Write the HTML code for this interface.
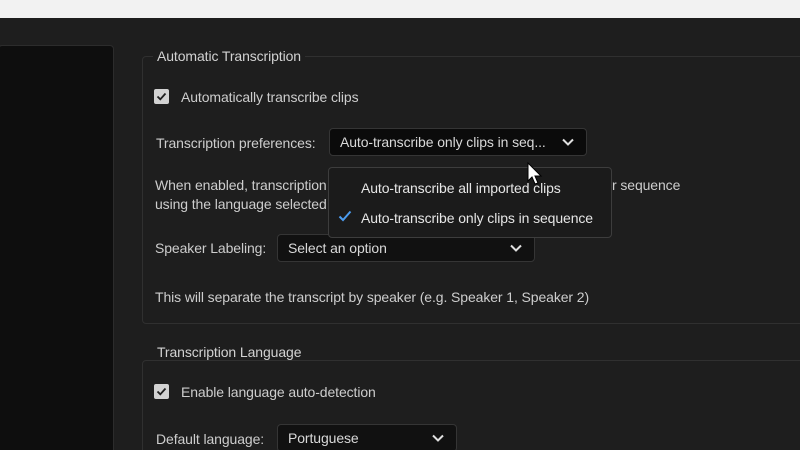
<!DOCTYPE html>
<html style="overflow:hidden;height:450px"><head><style>
body{margin:0;width:800px;height:450px;overflow:hidden;background:#1e1e1e;font-family:"Liberation Sans",sans-serif;color:#cdcdcd;position:relative}
.a{position:absolute;white-space:nowrap;font-size:14px;letter-spacing:-0.1px}
.top{position:absolute;left:0;top:0;width:800px;height:18px;background:#f2f2f2}
.left{position:absolute;left:-2px;top:45px;width:114px;height:420px;background:#0e0e0e;border:1px solid #2c2c2c;border-radius:4px}
.grp{position:absolute;left:142px;width:700px;border:1px solid #303030;border-radius:4px}
.leg{position:absolute;background:#1e1e1e;padding:0 4px;font-size:14px;letter-spacing:-0.1px;color:#d2d2d2}
.cb{position:absolute;width:15px;height:15px;background:#d2d2d2;border-radius:2px}
.cb svg{position:absolute;left:2px;top:2px}
.dd{position:absolute;height:26px;background:#0b0b0b;border:1px solid #353535;border-radius:4px}
.dd span{position:absolute;left:10px;top:5px;font-size:14px;letter-spacing:-0.1px;color:#d9d9d9;white-space:nowrap}
.dd svg{position:absolute;right:12px;top:9px}
.menu{position:absolute;left:328px;top:167px;width:282px;height:69px;background:#1b1b1b;border:1px solid #3d3d3d;border-radius:4px}
</style></head><body>
<div class="top"></div>
<div class="left"></div>
<div class="grp" style="top:56px;height:266px"></div>
<div class="leg" style="left:153px;top:48px">Automatic Transcription</div>
<div class="cb" style="left:154px;top:89px"><svg width="11" height="11" viewBox="0 0 11 11"><path d="M1.5 5.5 L4.3 8.3 L9.5 2.5" stroke="#1e1e1e" stroke-width="1.8" fill="none"/></svg></div>
<div class="a" style="left:181px;top:89px">Automatically transcribe clips</div>
<div class="a" style="left:156px;top:135px">Transcription preferences:</div>
<div class="dd" style="left:329px;top:128px;width:256px"><span>Auto-transcribe only clips in seq...</span><svg width="12" height="8" viewBox="0 0 12 8"><path d="M1 1.5 L6 6.5 L11 1.5" stroke="#e0e0e0" stroke-width="2" fill="none"/></svg></div>
<div class="a" style="left:155px;top:177px">When enabled, transcription</div>
<div class="a" style="left:612px;top:177px">r sequence</div>
<div class="a" style="left:155px;top:196px">using the language selected</div>
<div class="a" style="left:155px;top:240px">Speaker Labeling:</div>
<div class="dd" style="left:277px;top:234px;width:256px;background:#111"><span>Select an option</span><svg width="12" height="8" viewBox="0 0 12 8"><path d="M1 1.5 L6 6.5 L11 1.5" stroke="#e0e0e0" stroke-width="2" fill="none"/></svg></div>
<div class="a" style="left:155px;top:289px">This will separate the transcript by speaker (e.g. Speaker 1, Speaker 2)</div>
<div class="menu"></div>
<div class="a" style="left:361px;top:180px;color:#e6e6e6">Auto-transcribe all imported clips</div>
<svg style="position:absolute;left:338px;top:210px" width="14" height="12" viewBox="0 0 14 12"><path d="M1.5 6.5 L5 10 L12.5 1.5" stroke="#4b9cf0" stroke-width="2" fill="none"/></svg>
<div class="a" style="left:361px;top:210px;color:#e6e6e6">Auto-transcribe only clips in sequence</div>
<svg style="position:absolute;left:527px;top:162px" width="16" height="24" viewBox="0 0 16 24"><path d="M1 1 L1 19 L5 15 L8 22 L11 21 L8 14 L14 14 Z" fill="#fff" stroke="#000" stroke-width="1"/></svg>
<div class="grp" style="top:360px;height:100px"></div>
<div class="leg" style="left:153px;top:344px">Transcription Language</div>
<div class="cb" style="left:154px;top:384px"><svg width="11" height="11" viewBox="0 0 11 11"><path d="M1.5 5.5 L4.3 8.3 L9.5 2.5" stroke="#1e1e1e" stroke-width="1.8" fill="none"/></svg></div>
<div class="a" style="left:181px;top:384px">Enable language auto-detection</div>
<div class="a" style="left:156px;top:431px">Default language:</div>
<div class="dd" style="left:277px;top:424px;width:178px;background:#111"><span>Portuguese</span><svg width="12" height="8" viewBox="0 0 12 8"><path d="M1 1.5 L6 6.5 L11 1.5" stroke="#e0e0e0" stroke-width="2" fill="none"/></svg></div>
</body></html>
